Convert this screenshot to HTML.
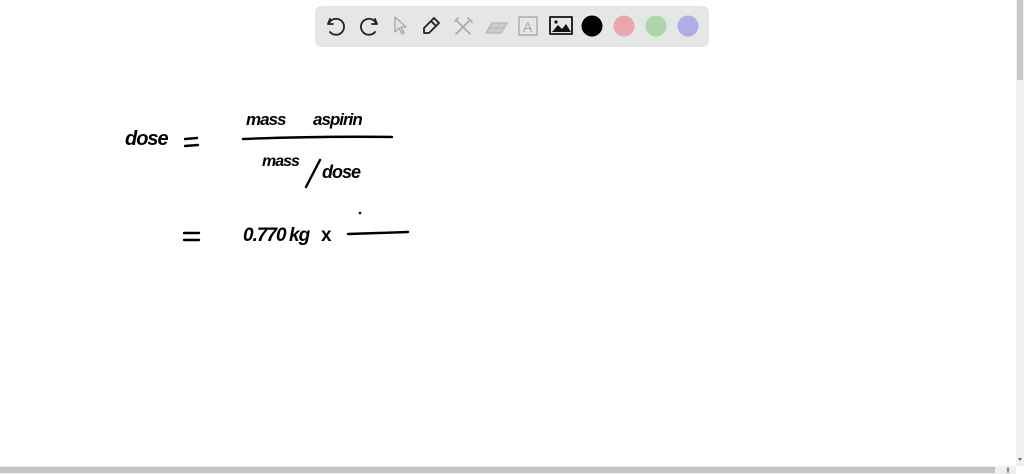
<!DOCTYPE html>
<html><head><meta charset="utf-8"><style>
html,body{margin:0;padding:0;width:1024px;height:474px;overflow:hidden;background:#fff;font-family:"Liberation Sans",sans-serif}
.tb{position:absolute;left:315px;top:6px;width:394px;height:41px;background:#e6e6e6;border-radius:6px}
.hw{position:absolute;font-family:"Liberation Sans",sans-serif;font-style:italic;font-weight:bold;color:#000;letter-spacing:-1px}
</style></head><body>
<div class="tb"></div>
<svg width="1024" height="474" style="position:absolute;left:0;top:0" fill="none" stroke-linecap="round" stroke-linejoin="round">
 <path d="M330 19 L328 24 L333 24" stroke="#222" stroke-width="1.8"/>
 <path d="M329 23 A8 8 0 1 1 330 32" stroke="#222" stroke-width="1.8"/>
 <path d="M375 19 L377 24 L372 24" stroke="#222" stroke-width="1.8"/>
 <path d="M376 23 A8 8 0 1 0 375 32" stroke="#222" stroke-width="1.8"/>
 <path d="M395 17 L395 32 L399 28 L402 34 L404 33 L401 27 L406 27 Z" stroke="#aaa" stroke-width="1.4"/>
 <path d="M424 33 L424 28 L434 18 L439 23 L429 33 Z M431 21 L436 26" stroke="#222" stroke-width="1.8"/>
 <path d="M456 20 L470 34 M470 20 L456 34 M455 21 L458 18 M468 18 L472 22" stroke="#aaa" stroke-width="1.6"/>
 <path d="M486 33 L492 23 L507 23 L501 33 Z M489 28 L504 28" stroke="#bbb" stroke-width="1.6" fill="#ccc"/>
 <rect x="519" y="17" width="18" height="18" stroke="#aaa" stroke-width="1.4"/>
 <text x="523" y="32" font-size="14" fill="#aaa" stroke="none" font-family="Liberation Sans">A</text>
 <rect x="550" y="17" width="22" height="17" stroke="#111" stroke-width="1.8"/>
 <path d="M552 32 L558 25 L562 29 L566 24 L571 32 Z" fill="#111" stroke="none"/>
 <circle cx="556" cy="22" r="1.6" fill="#111" stroke="none"/>
 <circle cx="592" cy="26" r="10.5" fill="#000" stroke="none"/>
 <circle cx="624" cy="26" r="10.5" fill="#e8a7ad" stroke="none"/>
 <circle cx="656" cy="26" r="10.5" fill="#acd5a8" stroke="none"/>
 <circle cx="688" cy="26" r="10.5" fill="#b0acea" stroke="none"/>
 <g stroke="#000" stroke-width="2.4">
  <path d="M185 139 L197 138 M185 146 L198 145"/>
  <path d="M243 139 Q320 136 392 137"/>
  <path d="M320 160 L306 187"/>
  <path d="M184 233 L199 233 M184 240 L199 240"/>
  <path d="M348 234 L408 232"/>
 </g>
 <circle cx="360" cy="213" r="1.3" fill="#000"/>
 <circle cx="185" cy="233" r="1.2" fill="#000"/>
 <rect x="1016" y="0" width="8" height="466" fill="#f0f0f0"/>
 <rect x="1017" y="0" width="6" height="80" fill="#c8c8c8"/>
 <rect x="0" y="466" width="1016" height="8" fill="#f0f0f0"/>
 <rect x="0" y="467" width="995" height="6" fill="#c4c4c4"/>
 <path d="M1018 458 L1022 458 L1020 461 Z" fill="#666"/>
 <path d="M1008 468 L1008 472" stroke="#666" stroke-width="1.5"/>
</svg>
<div class="hw" style="left:125px;top:128px;font-size:20px">dose</div>
<div class="hw" style="left:246px;top:110px;font-size:17px">mass</div>
<div class="hw" style="left:313px;top:110px;font-size:17px">aspirin</div>
<div class="hw" style="left:262px;top:153px;font-size:16px">mass</div>
<div class="hw" style="left:322px;top:162px;font-size:18px">dose</div>
<div class="hw" style="left:243px;top:225px;font-size:19px">0.770</div>
<div class="hw" style="left:289px;top:225px;font-size:19px">kg</div>
<div class="hw" style="left:321px;top:225px;font-size:19px;font-style:normal">x</div>
</body></html>
